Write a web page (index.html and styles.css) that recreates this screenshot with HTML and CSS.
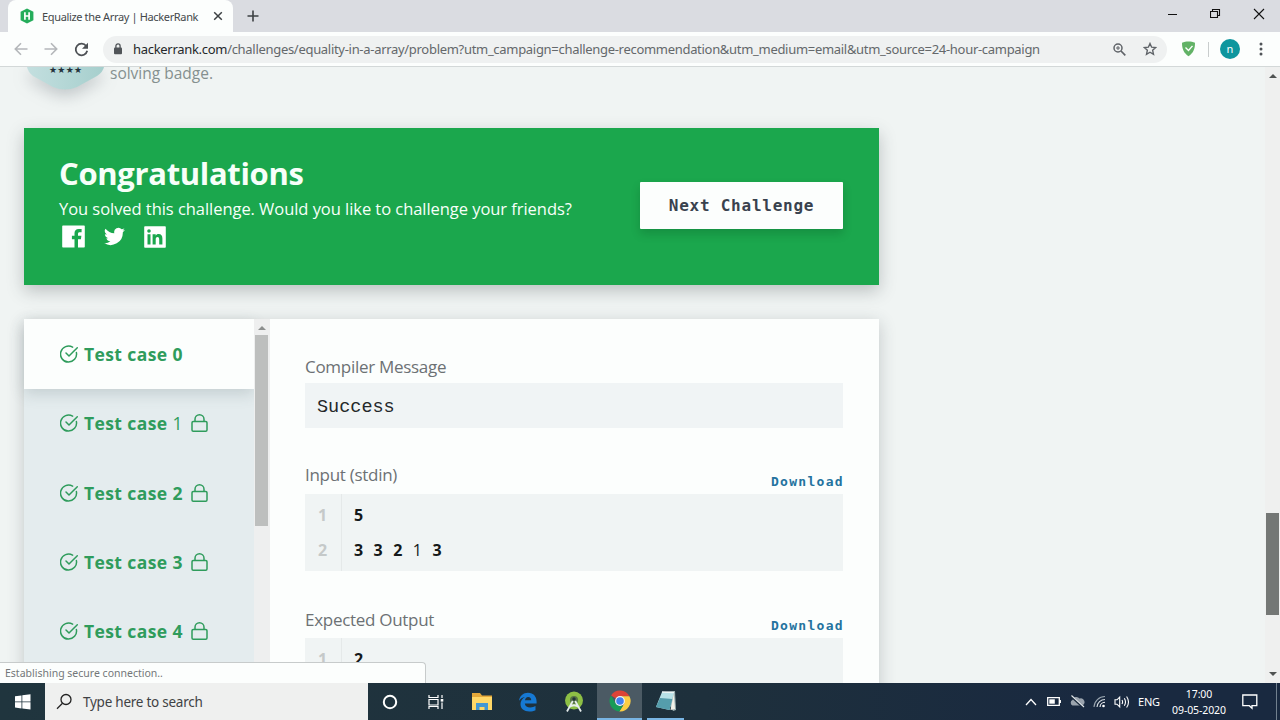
FILE: index.html
```html
<!DOCTYPE html>
<html lang="en">
<head>
<meta charset="utf-8">
<title>Equalize the Array | HackerRank</title>
<link rel="stylesheet" href="styles.css">
</head>
<body>
<svg class="defs" width="0" height="0">
  <symbol id="check" viewBox="0 0 18 18"><g fill="none" stroke="currentColor" stroke-width="1.5" stroke-linecap="round" stroke-linejoin="round"><path d="M16.4 7.6a8 8 0 1 1-3.8-5.4"/><path d="M6 8l3 3 8.3-8.3"/></g></symbol>
  <symbol id="lock" viewBox="0 0 17 18"><g fill="none" stroke="currentColor" stroke-width="1.5" stroke-linejoin="round"><rect x="1" y="7.5" width="15" height="9.7" rx="1.2"/><path d="M4 7.5V5.3a4.5 4.5 0 0 1 9 0v2.2"/></g></symbol>
</svg>

<header class="tabstrip">
  <div class="tab">
    <svg class="favicon" width="14" height="16" viewBox="0 0 14 16"><path d="M7 .4l6.4 3.3v8.6L7 15.6.6 12.3V3.700z" fill="#25ad5b"/><path d="M4.900 4.300v7.400M9.100 4.300v7.400M4.900 8h4.200" stroke="#fff" stroke-width="1.700"/></svg>
    <span class="tab-title">Equalize the Array | HackerRank</span>
    <svg class="tab-close" width="10" height="10" viewBox="0 0 10 10"><path d="M1.200 1.200l7.600 7.600M8.800 1.200L1.200 8.800" stroke="#3c4043" stroke-width="1.500"/></svg>
  </div>
  <svg class="new-tab" width="12" height="12" viewBox="0 0 12 12"><path d="M6 .5v11M.5 6h11" stroke="#3c4043" stroke-width="1.600"/></svg>
  <div class="window-buttons">
    <svg width="10" height="12" viewBox="0 0 10 12"><path d="M0 6.500h9" stroke="#111"/></svg>
    <svg width="11" height="12" viewBox="0 0 11 12"><path d="M.5 3.500h7v6h-7zM2.500 3.500v-2h7v6h-2" fill="none" stroke="#111" stroke-width="1.100"/></svg>
    <svg width="12" height="12" viewBox="0 0 12 12"><path d="M1 1l10 10M11 1L1 11" stroke="#111" stroke-width="1.100"/></svg>
  </div>
</header>

<nav class="toolbar">
  <svg class="nav-icon" width="14" height="14" viewBox="0 0 14 14"><path d="M13.500 7H1.500M7 1.300L1.300 7 7 12.700" fill="none" stroke="#b4b7ba" stroke-width="1.600"/></svg>
  <svg class="nav-icon" width="14" height="14" viewBox="0 0 14 14"><path d="M.5 7h12M7 1.300L12.700 7 7 12.700" fill="none" stroke="#b4b7ba" stroke-width="1.600"/></svg>
  <svg class="nav-icon" width="15" height="15" viewBox="0 0 15 15"><path d="M12.200 4A5.800 5.800 0 1 0 13.200 8.800" fill="none" stroke="#4d5155" stroke-width="1.800"/><path d="M14 .8v6H8z" fill="#4d5155"/></svg>
  <div class="omnibox">
    <svg width="8" height="12" viewBox="0 0 8 12"><rect y="4.500" width="8" height="6.800" rx="1" fill="#505458"/><path d="M1.900 5V3a2.100 2.100 0 0 1 4.200 0v2" fill="none" stroke="#505458" stroke-width="1.300"/></svg>
    <span class="url"><b>hackerrank.com</b>/challenges/equality-in-a-array/problem?utm_campaign=challenge-recommendation&amp;utm_medium=email&amp;utm_source=24-hour-campaign</span>
    <svg class="zoom-icon" width="13" height="13" viewBox="0 0 13 13"><g fill="none" stroke="#5f6368"><circle cx="5" cy="5" r="4" stroke-width="1.500"/><path d="M8 8l4.300 4.300" stroke-width="1.700"/><path d="M5 3v4M3 5h4"/></g></svg>
    <svg class="star" width="14" height="14" viewBox="0 0 14 14"><path d="M7 1.500l1.650 3.700 4 .4-3 2.700.85 4L7 10.200l-3.500 2.100.85-4-3-2.700 4-.4z" fill="none" stroke="#5f6368" stroke-width="1.400"/></svg>
  </div>
  <svg class="shield" width="15" height="16" viewBox="0 0 15 16"><path d="M7.500.5c2.200 0 4.600.5 6.500 1.300 0 6-1.600 10.300-6.500 13.400C2.600 12.100 1 7.800 1 1.800 2.900 1 5.300.5 7.500.5z" fill="#62b266"/><path d="M4.500 6.500l3 3 4-4.600" fill="none" stroke="#fff" stroke-width="1.400"/></svg>
  <span class="divider"></span>
  <span class="avatar">n</span>
  <svg class="menu" width="4" height="14" viewBox="0 0 4 14" fill="#505458"><circle cx="2" cy="2" r="1.500"/><circle cx="2" cy="7" r="1.500"/><circle cx="2" cy="12" r="1.500"/></svg>
</nav>

<div class="viewport">
  <main class="page">
    <div class="badge-row">
      <svg class="badge" width="84" height="61" viewBox="0 0 84 61"><defs><linearGradient id="bg" x1="0" x2="1"><stop offset="0" stop-color="#c3dfdf"/><stop offset="1" stop-color="#a6cfcd"/></linearGradient></defs><path d="M3 0H80Q79 5 73 9L53 20Q41 25 29 20L9 9Q4 5 3 0z" fill="url(#bg)"/></svg>
      <span class="stars">★★★★</span>
      <span class="badge-text">solving badge.</span>
    </div>

    <section class="banner">
      <div>
        <h1>Congratulations</h1>
        <p>You solved this challenge. Would you like to challenge your friends?</p>
        <div class="share">
          <svg width="23" height="23" viewBox="0 0 23 23"><path fill="#fff" fill-rule="evenodd" d="M1 .5h21q.8 0 .8.800v20.400q0 .8-.8.800h-6v-8.300h2.900l.5-3.400H16V9c0-1.200.4-1.800 1.800-1.800h1.800V4.100h-2.800c-3 0-4.300 1.600-4.300 4.200v2.500h-2.600v3.400h2.600v8.300H1q-.8 0-.8-.8V1.300Q.2.5 1 .5z"/></svg>
          <svg width="21" height="19" viewBox="0 0 24 20"><path fill="#fff" d="M24 2.400a9.800 9.800 0 0 1-2.800.8A5 5 0 0 0 23.300.5a9.900 9.900 0 0 1-3.100 1.200 4.900 4.900 0 0 0-8.400 4.500A14 14 0 0 1 1.700 1 4.900 4.900 0 0 0 3.200 7.600 4.900 4.900 0 0 1 1 7c-.1 2.300 1.600 4.400 3.900 4.900a5 5 0 0 1-2.200.1 4.900 4.900 0 0 0 4.600 3.400A9.900 9.900 0 0 1 0 17.500a14 14 0 0 0 21.500-12.400A10 10 0 0 0 24 2.400z"/></svg>
          <svg width="22" height="22" viewBox="0 0 22 22"><path fill="#fff" fill-rule="evenodd" d="M1 .2h20q.8 0 .8.800v20q0 .8-.8.800H1q-.8 0-.8-.8V1q0-.8.800-.8zM3.500 8.300v10.300h3V8.300zM5 3.200a1.800 1.800 0 1 0 0 3.600 1.800 1.800 0 0 0 0-3.600zM8.600 8.300v10.300h3.100v-5.200c0-1.500.5-2.500 1.800-2.500s1.700 1 1.700 2.500v5.200h3.200v-6c0-2.800-1.200-4.500-3.700-4.500-1.500 0-2.500.7-3 1.600V8.300z"/></svg>
        </div>
      </div>
      <button class="next">Next Challenge</button>
    </section>

    <section class="results">
      <ul class="cases">
        <li class="case active"><svg class="check"><use href="#check"/></svg><span>Test case 0</span></li>
        <li class="case"><svg class="check"><use href="#check"/></svg><span>Test case <i>1</i></span><svg class="lock"><use href="#lock"/></svg></li>
        <li class="case"><svg class="check"><use href="#check"/></svg><span>Test case 2</span><svg class="lock"><use href="#lock"/></svg></li>
        <li class="case"><svg class="check"><use href="#check"/></svg><span>Test case 3</span><svg class="lock"><use href="#lock"/></svg></li>
        <li class="case"><svg class="check"><use href="#check"/></svg><span>Test case 4</span><svg class="lock"><use href="#lock"/></svg></li>
      </ul>
      <div class="list-scroll"><svg width="8" height="4" viewBox="0 0 8 4"><path d="M0 4l4-4 4 4z" fill="#8c8f8e"/></svg><span class="list-thumb"></span></div>
      <div class="output">
        <div class="label-row first"><span class="label">Compiler Message</span></div>
        <div class="message">Success</div>
        <div class="label-row second"><span class="label">Input (stdin)</span><a class="download">Download</a></div>
        <div class="code"><div class="gutter"><span>1</span><span>2</span></div><div class="lines"><span>5</span><span>3 3 2 <i>1</i> 3</span></div></div>
        <div class="label-row third"><span class="label">Expected Output</span><a class="download">Download</a></div>
        <div class="code"><div class="gutter"><span>1</span></div><div class="lines"><span>2</span></div></div>
      </div>
    </section>
  </main>
  <div class="page-scroll">
    <svg width="8" height="4" viewBox="0 0 8 4"><path d="M0 4l4-4 4 4z" fill="#505352"/></svg>
    <span class="page-thumb"></span>
    <svg width="8" height="4" viewBox="0 0 8 4"><path d="M0 0l4 4 4-4z" fill="#505352"/></svg>
  </div>
  <div class="status"><span>Establishing secure connection..</span></div>
</div>

<footer class="taskbar">
  <div class="start"><svg width="16" height="16" viewBox="0 0 16 16" fill="#fff"><path d="M0 2.300l6.500-.9v6.100H0zM7.300 1.300L15.500.2v7.300H7.300zM0 8.300h6.500v6.100L0 13.500zM7.300 8.300h8.200v7.300l-8.200-1.100z"/></svg></div>
  <div class="search"><svg width="17" height="17" viewBox="0 0 17 17"><g fill="none" stroke="#222" stroke-width="1.300"><circle cx="10" cy="6.500" r="5"/><path d="M6.500 10.200L1 15.700"/></g></svg><span>Type here to search</span></div>
  <div class="apps">
    <div class="app"><svg width="16" height="16" viewBox="0 0 16 16"><circle cx="8" cy="8" r="6.200" fill="none" stroke="#fff" stroke-width="2"/></svg></div>
    <div class="app"><svg width="16" height="16" viewBox="0 0 16 16"><path d="M1 1v2.500h9V1M1 15v-2.500h9V15M1 5.500h9v5.500H1zM14 1v3M14 8.500V15" fill="none" stroke="#fff" stroke-width="1.200"/><path d="M12.700 5h2.600v2.600h-2.600z" fill="#fff"/></svg></div>
    <div class="app"><svg width="22" height="20" viewBox="0 0 22 20"><path d="M1 1h8l2 2.500h10V18H1z" fill="#e4a83a"/><path d="M1 5h20v13H1z" fill="#ffd767"/><path d="M5 11h12v7h-3.500v-3h-5v3H5z" fill="#4397d4"/></svg></div>
    <div class="app"><svg width="20" height="20" viewBox="0 0 20 20"><path fill="#1679d3" d="M1 8.800C1.700 3.800 5.300.8 10 .8c5.500 0 8.600 4 8.600 8.700v2H6.800c.2 2.800 2.500 4 5.400 4 2.200 0 3.900-.6 5.300-1.400v4.100c-1.600.9-3.600 1.400-6.200 1.400-5.200 0-8.800-2.800-8.800-7.500 0-3.300 1.700-5.800 4.500-7.200C4.200 5.400 2.300 6.700 1 8.800zM7 8.200h6.200c0-2-1-3.300-3-3.300-1.800 0-3 1.400-3.200 3.300z"/></svg></div>
    <div class="app"><svg width="20" height="22" viewBox="0 0 20 22"><circle cx="10" cy="9.500" r="9" fill="#8dbf45"/><circle cx="10" cy="9" r="4" fill="#557345"/><circle cx="10" cy="8" r="1.700" fill="#22333a"/><path d="M8.800 10L3 20.500M11.200 10L17 20.500M5 16q5-3.500 10 0" fill="none" stroke="#e5ecec" stroke-width="1.800"/></svg></div>
    <div class="app current"><svg width="22" height="22" viewBox="0 0 22 22"><path d="M11 11L2.050 5.500A10.500 10.500 0 0 1 20.500 6.500L11 6.200z" fill="#dc4437"/><path d="M11 6.200h9.400A10.500 10.500 0 0 1 10.300 21.500L15.300 13.500z" fill="#fcce44"/><path d="M2.050 5.500L6.800 13.500 11 15.800h3L10.300 21.500A10.500 10.500 0 0 1 2.050 5.500z" fill="#189b58"/><circle cx="11" cy="11" r="4.900" fill="#f4f4f4"/><circle cx="11" cy="11" r="3.800" fill="#4280ef"/></svg></div>
    <div class="app open"><svg width="22" height="22" viewBox="0 0 22 22"><path d="M8 2l12-1 1 19-3 1z" fill="#9eb2b4"/><path d="M7 2l12 .5L14.500 20 1 17z" fill="#b8e1e7"/><path d="M5 8l12.500 1-3 11L1 17z" fill="#559dac"/><path d="M18.800 3.500L20 19l-4.500 1z" fill="#f2f1e8"/><path d="M7 2l12 .5" stroke="#eef5f5" stroke-width="1.600"/></svg></div>
  </div>
  <div class="tray">
    <svg class="t-up" width="12" height="8" viewBox="0 0 12 8"><path d="M1 7l5-5.500L11 7" fill="none" stroke="#fff" stroke-width="1.300"/></svg>
    <svg class="t-bat" width="14" height="9" viewBox="0 0 14 9"><path d="M.7.700h11.600v7.600H.7zM13.300 3v3" fill="none" stroke="#fff" stroke-width="1.300"/><path d="M2.300 2.300h5.500v4.400H2.300z" fill="#fff"/></svg>
    <svg class="t-cloud" width="16" height="13" viewBox="0 0 16 13"><path d="M3.500 10.500a3 3 0 0 1 0-5.500 4 4 0 0 1 7-1.500 3.700 3.700 0 0 1 2.500 7z" fill="#9aa3ad"/><path d="M2 1l12.500 11.500" stroke="#1b2b3d" stroke-width="2.400"/><path d="M2.500.5L15 12" stroke="#e6eaee" stroke-width="1.100"/></svg>
    <svg class="t-wifi" width="13" height="13" viewBox="0 0 13 13"><g fill="none" stroke="#9aa6b0" stroke-width="1.100"><path d="M1 12A11 11 0 0 1 12 1.500"/><path d="M4 12a8 8 0 0 1 8-7.500" stroke="#d5dce1"/><path d="M7 12a5 5 0 0 1 5-4.700" stroke="#fff"/></g><circle cx="10.500" cy="11" r="1.300" fill="#fff"/></svg>
    <svg class="t-vol" width="16" height="14" viewBox="0 0 16 14"><g fill="none" stroke="#fff" stroke-width="1.100"><path d="M1 4.800h2L5.700 2v10L3 9.200H1z"/><path d="M8 5q1.200 2 0 4M10.300 3.300q2.400 3.700 0 7.400M12.600 1.500q3.800 5.500 0 11"/></g></svg>
    <span class="t-lang">ENG</span>
    <div class="clock"><span class="time">17:00</span><span class="date">09-05-2020</span></div>
    <svg class="t-note" width="16" height="16" viewBox="0 0 16 16"><path d="M.8 1h14v10.700H10v2.600L7.300 11.700H.8z" fill="none" stroke="#fff" stroke-width="1.300"/></svg>
    <span class="peek"></span>
  </div>
</footer>
</body>
</html>
```
FILE: styles.css
```css
* { box-sizing: border-box; }
body { margin: 0; width: 1280px; height: 720px; overflow: hidden; display: flex; flex-direction: column; background: #f0f4f3; font-family: "Noto Sans", sans-serif; white-space: nowrap; }
svg { display: block; flex: none; }
.defs { position: absolute; }
i { font-style: normal; font-weight: 400; }

.tabstrip { flex: none; height: 32px; background: #dadce1; display: flex; align-items: center; padding-left: 8px; }
.tab { width: 225px; height: 32px; background: #fcfefd; border-radius: 8px 8px 0 0; display: flex; align-items: center; padding-left: 12px; }
.tab-title { width: 156px; margin-left: 8px; font-size: 11px; letter-spacing: -.35px; color: #44484b; }
.tab-close { margin-left: 15px; }
.new-tab { margin-left: 14px; }
.window-buttons { margin-left: auto; display: flex; gap: 32px; padding: 0 15px 4px 0; }

.toolbar { flex: none; height: 35px; background: #fcfefd; border-bottom: 1px solid #d3d8d8; display: flex; align-items: center; padding-left: 14px; }
.nav-icon { margin-right: 16px; }
.omnibox { width: 1064px; height: 27px; border-radius: 14px; background: #eff1f1; display: flex; align-items: center; padding: 0 10px 0 11px; margin-left: -2px; }
.url { margin-left: 11px; font-size: 13px; line-height: 26px; color: #64686b; letter-spacing: -.3px; }
.url b { font-weight: 400; color: #25282b; }
.zoom-icon { margin-left: auto; }
.star { margin-left: 17px; }
.shield { margin-left: 14px; }
.divider { width: 1px; height: 15px; background: #c9cdcd; margin-left: 12px; }
.avatar { width: 20px; height: 20px; border-radius: 50%; background: #0e969e; color: #fff; font-size: 11px; line-height: 19px; text-align: center; margin-left: 11px; }
.menu { margin-left: 19px; }

.viewport { position: relative; flex: 1; min-height: 0; display: flex; justify-content: space-between; overflow: hidden; }
.page { width: 855px; margin-left: 24px; }
.badge-row { position: relative; height: 61px; }
.badge { filter: drop-shadow(0 6px 8px rgba(70, 80, 90, .28)); }
.stars { position: absolute; left: 25px; top: 0; font: 9px/6px "DejaVu Sans", sans-serif; color: #24323b; letter-spacing: .3px; }
.badge-text { position: absolute; left: 86px; top: 0; font: 15.500px/13px "Open Sans", sans-serif; color: #85908f; }

.banner { height: 157px; background: #1ba74d; box-shadow: 0 6px 16px rgba(50, 60, 65, .28); display: flex; justify-content: space-between; padding: 27px 36px 0 35px; color: #f7fff9; }
.banner h1 { margin: 0; font: 700 31px/36px "Open Sans", sans-serif; letter-spacing: -.33px; }
.banner p { margin: 6px 0 0; font: 16.500px/24px "Open Sans", sans-serif; letter-spacing: -.05px; }
.share { display: flex; align-items: center; gap: 19px; height: 23px; margin: 4px 0 0 3px; }
.next { width: 203px; height: 47px; margin-top: 27px; padding: 0; border: 0; border-radius: 1px; background: #fcfefd; color: #39424e; font: 700 16px/47px "DejaVu Sans Mono", monospace; letter-spacing: .75px; box-shadow: 0 5px 10px rgba(0, 50, 20, .2); }

.results { margin-top: 34px; height: 400px; display: flex; background: #fcfefd; box-shadow: 0 4px 16px rgba(50, 60, 65, .24); }
.cases { list-style: none; margin: 0; padding: 0; width: 230px; background: #e4ecee; }
.case { height: 69.400px; display: flex; align-items: center; padding: 0 0 1px 36px; color: #2f9c5c; font: 700 17.500px/24px "Open Sans", sans-serif; letter-spacing: .4px; }
.case.active { height: 70px; background: #fcfefd; box-shadow: 0 5px 14px rgba(70, 90, 95, .2); }
.case span { width: 100px; margin-left: 6px; }
.check { width: 18px; height: 18px; }
.lock { width: 17px; height: 18px; margin-left: 7px; }
.list-scroll { width: 16px; background: #eeefef; display: flex; flex-direction: column; align-items: center; padding: 7px 1px 0 0; }
.list-thumb { width: 13px; height: 191px; background: #bdbfbe; margin-top: 5px; }

.output { flex: 1; padding: 36px 36px 0 35px; }
.label-row { display: flex; justify-content: space-between; }
.label { font: 17px/24px "Open Sans", sans-serif; letter-spacing: -.29px; color: #6c7174; }
.first { height: 28px; }
.second { height: 31px; margin-top: 35px; }
.third { height: 30px; margin-top: 37px; }
.message { height: 45px; background: #f0f4f5; padding-left: 12px; font: 18.500px/49px "Liberation Mono", monospace; color: #24282a; }
.download { align-self: flex-end; font: 700 13px/24px "DejaVu Sans Mono", monospace; color: #24739f; letter-spacing: 1.300px; margin-right: -1px; }
.code { display: flex; height: 77px; background: #f0f4f4; font: 700 16px/34.500px "Open Sans", sans-serif; color: #15191a; }
.gutter, .lines { display: flex; flex-direction: column; padding-top: 4px; }
.gutter { width: 37px; border-right: 1px solid #e5e9e9; color: #c5c9c9; padding-left: 13px; }
.lines { padding-left: 12px; letter-spacing: .65px; word-spacing: 5px; }

.page-scroll { width: 15px; background: #eff0ef; display: flex; flex-direction: column; align-items: center; padding: 7px 0; }
.page-thumb { width: 13px; height: 102px; background: #747775; margin: 435px 0 auto; }
.status { position: absolute; left: 0; bottom: 0; width: 426px; height: 21px; background: #fcfefd; border: 1px solid #c7cbcb; border-width: 1px 1px 0 0; border-radius: 0 4px 0 0; padding-left: 5px; font-size: 10.500px; line-height: 21px; color: #737779; }

.taskbar { flex: none; height: 37px; display: flex; background: linear-gradient(90deg, #20353e, #1e303c 55%, #192940 85%); color: #fff; }
.start { width: 45px; display: flex; align-items: center; padding-left: 15px; }
.search { width: 323px; background: #eff0ef; display: flex; align-items: center; padding-left: 11px; color: #3f4244; font-size: 13.500px; letter-spacing: -.25px; }
.search span { margin-left: 10px; }
.apps { display: flex; margin-left: -1px; }
.app { width: 45px; height: 37px; margin-right: 1px; display: flex; align-items: center; justify-content: center; }
.app.current { background: #4b5a64; }
.app.current, .app.open { border-bottom: 2px solid #79b5e4; }
.app.open { width: 37px; margin-left: 4px; }
.tray { margin-left: auto; display: flex; align-items: center; font-size: 11px; }
.t-bat { margin-left: 10px; }
.t-cloud { margin-left: 8px; }
.t-wifi { margin-left: 8px; }
.t-vol { margin-left: 8px; }
.t-lang { width: 23px; margin-left: 8px; letter-spacing: -.2px; }
.clock { width: 56px; margin-left: 10px; display: flex; flex-direction: column; align-items: center; line-height: 16px; font-size: 10.500px; letter-spacing: -.1px; }
.t-note { margin-left: 15px; }
.peek { width: 1px; height: 37px; background: #71808e; margin: 0 3px 0 18px; }
```
